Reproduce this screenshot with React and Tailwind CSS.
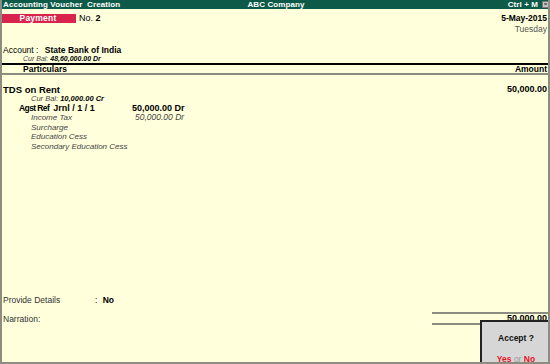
export default function App() {
  return (
    <div
      className="relative w-[550px] h-[364px] bg-[#ffffdc] border-l-2 border-r-2 border-b-2 border-[#8c8c80] flex flex-col text-black overflow-hidden"
      style={{ fontFamily: '"Liberation Sans", Arial, sans-serif' }}
    >
      {/* title bar */}
      <div className="h-[9px] bg-[#0e5a48] text-white text-[8px] font-bold leading-[9px] grid grid-cols-[1fr_auto_1fr] items-center pl-[3px] pr-[1px] tracking-[0.1px] shrink-0 -mx-[2px]">
        <span>Accounting Voucher&nbsp; Creation</span>
        <span className="text-center">ABC Company</span>
        <div className="flex justify-end items-center">
          <span className="mr-[4px]">Ctrl + M</span>
          <span className="w-[7px] h-[7px] bg-[#c9c9c9] border border-[#777] text-[#333] text-[6px] leading-[5px] text-center">×</span>
        </div>
      </div>

      {/* voucher type / date */}
      <div className="flex justify-between items-start mt-[5px] h-[22px] -ml-[2px] shrink-0">
        <div className="flex items-center">
          <div className="w-[76px] h-[9px] bg-[#d9244e] text-white text-[8.5px] font-bold leading-[9px] text-center tracking-[0.2px]">
            Payment
          </div>
          <span className="ml-[3px] text-[9px] leading-[9px]">
            No. <b>2</b>
          </span>
        </div>
        <div className="text-right text-[8.5px] leading-[11px] pr-[1px] -mt-[1px]">
          <div className="font-bold">5-May-2015</div>
          <div className="text-[#555]">Tuesday</div>
        </div>
      </div>

      {/* account */}
      <div className="mt-[9px] pl-[1px] shrink-0">
        <div className="text-[8.5px] leading-[10px]">
          Account : <b className="ml-[4px]">State Bank of India</b>
        </div>
        <div className="pl-[20px] italic text-[7px] leading-[8px]">
          <span className="text-[#444]">Cur Bal:</span> <b>48,60,000.00 Dr</b>
        </div>
      </div>

      {/* header */}
      <div className="border-t-2 border-black border-b-2 border-b-[#8c8c80] h-[12px] flex items-center justify-between text-[8.5px] font-bold shrink-0">
        <span className="pl-[21px]">Particulars</span>
        <span className="pr-[1px]">Amount</span>
      </div>

      {/* entries */}
      <div className="mt-[10px] pl-[1px] leading-[9.5px] shrink-0">
        <div className="flex justify-between font-bold text-[9.5px] leading-[9px]">
          <span>TDS on Rent</span>
          <span className="pr-[1px] text-[9px]">50,000.00</span>
        </div>
        <div className="pl-[28px] italic text-[7.5px]">
          <span className="text-[#444]">Cur Bal:</span> <b>10,000.00 Cr</b>
        </div>
        <div className="flex pl-[16px] font-bold text-[9px]">
          <span className="w-[113px] whitespace-nowrap">
            <span className="text-[8.5px] tracking-[-0.6px] mr-[4px]">Agst Ref</span>Jrnl / 1 / 1
          </span>
          <span>50,000.00 Dr</span>
        </div>
        <div className="pl-[28px] italic text-[#444] text-[8px] flex">
          <div className="w-[104px]">
            <div>Income Tax</div>
            <div>Surcharge</div>
            <div>Education Cess</div>
            <div className="whitespace-nowrap">Secondary Education Cess</div>
          </div>
          <div className="text-[8.5px]">50,000.00 Dr</div>
        </div>
      </div>

      <div className="flex-1" />

      {/* footer */}
      <div className="pl-[1px] text-[8.5px] leading-[10px] shrink-0">
        <div className="flex">
          <span className="w-[92px] text-[#333]">Provide Details</span>
          <span>
            : <b className="ml-[3px]">No</b>
          </span>
        </div>
      </div>
      <div className="flex mt-[7px] mb-[37px] shrink-0">
        <span className="pl-[1px] pt-[2px] text-[#333] text-[8.5px] leading-[10px] flex-1">Narration:</span>
        <div className="w-[116px] border-t-2 border-b-2 border-[#8c8c80] h-[13px] text-right font-bold pr-[1px] text-[9px] leading-[9px]">
          50,000.00
        </div>
      </div>

      {/* accept dialog */}
      <div className="absolute -right-[2px] -bottom-[2px] w-[70px] h-[44px] bg-[#d6d6d6] border-2 border-[#222] border-r-0 border-b-0 flex flex-col items-center text-[8.5px] leading-[10px]">
        <div className="mt-[11px] font-bold text-[#111]">Accept ?</div>
        <div className="mt-[11px] font-bold">
          <span className="text-[#e8141e]">Yes</span>
          <span className="text-[#999] font-normal"> or </span>
          <span className="text-[#e8141e]">No</span>
        </div>
      </div>
    </div>
  );
}
